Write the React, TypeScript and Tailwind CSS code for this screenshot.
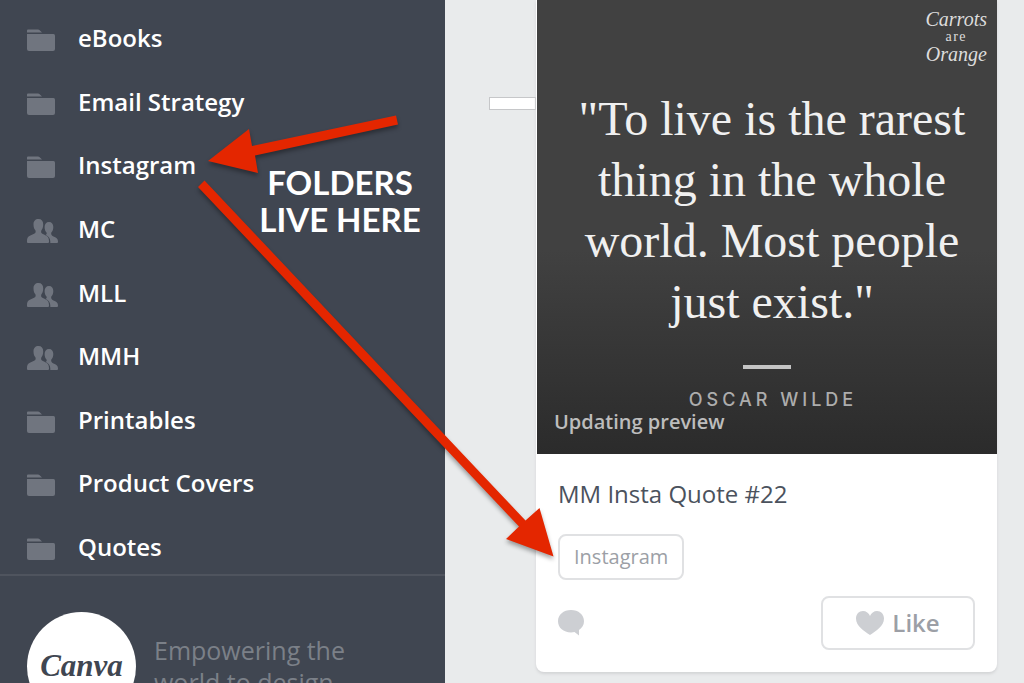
import { Fragment } from "react";
import { clsx } from "clsx";

type Folder = { name: string; shared?: boolean };

const folders: Folder[] = [
  { name: "eBooks" },
  { name: "Email Strategy" },
  { name: "Instagram" },
  { name: "MC", shared: true },
  { name: "MLL", shared: true },
  { name: "MMH", shared: true },
  { name: "Printables" },
  { name: "Product Covers" },
  { name: "Quotes" },
];

const quote = [
  '"To live is the rarest',
  "thing in the whole",
  "world. Most people",
  'just exist."',
];

function FolderIcon() {
  return (
    <svg width="32" height="24" viewBox="0 -1 32 24" fill="#70757f" aria-hidden="true">
      <path d="M0 3.500V1.500Q0 0.500 1 0.500H11Q12 0.500 12.700 1.200L15 3.500Z" />
      <path d="M0 5H26.500Q28 5 28 6.500V20Q28 22 26 22H2Q0 22 0 20Z" />
    </svg>
  );
}

function PeopleIcon() {
  return (
    <svg width="32" height="24" viewBox="0 0 32 24" fill="#70757f" aria-hidden="true">
      <path d="M11.500 0C8.400 0 6.500 2 6.500 5.200C6.500 8 7.200 10 8.500 11.500C9.200 13.600 8 14.600 5.500 15.600C2.500 16.800 0 17.800 0 22V23Q0 24 1 24H21Q22 24 22 23V22C22 17.800 19.500 16.800 17 15.600C14.500 14.600 13.600 13.600 14.300 11.500C15.500 10 16.200 8 16.200 5.200C16.200 2 14.500 0 11.500 0Z" />
      <path d="M22 3C19.200 3 17.600 5 17.600 8C17.600 10.400 18.300 12.400 19.500 13.600C20 14.800 19.600 15.600 18.600 16C21.500 17.400 23.300 19 23.300 22.400V24H30Q31 24 31 23V22.500C31 19.500 29 18.600 26.500 17.500C24.500 16.600 23.800 15.400 24.300 13.600C25.600 12.400 26.300 10.400 26.300 8C26.300 5 24.800 3 22 3Z" />
    </svg>
  );
}

function Sidebar() {
  return (
    <aside className="flex flex-col w-[445px] shrink-0 bg-[#404651]">
      <nav className="flex-1 pt-5 pb-[9px] border-b-2 border-[#4f545e]">
        <ul className="flex flex-col justify-between h-full">
          {folders.map((folder) => (
            <li key={folder.name}>
              <a
                href="#"
                className="flex items-center gap-[19px] h-9 pl-[27px] text-white text-[24px] font-semibold"
              >
                <span className="pt-1 w-8 shrink-0">
                  {folder.shared ? <PeopleIcon /> : <FolderIcon />}
                </span>
                {folder.name}
              </a>
            </li>
          ))}
        </ul>
      </nav>
      <footer className="flex gap-[18px] h-[107px] pt-9 pl-[27px] overflow-hidden">
        <div className="flex items-center justify-center size-[109px] shrink-0 rounded-full bg-white text-[#404651] text-[31px] font-bold italic font-['Liberation_Serif',serif]">
          Canva
        </div>
        <p className="pt-[22px] text-[25px] leading-8 text-[#7b8088]">
          Empowering the
          <br />
          world to design
        </p>
      </footer>
    </aside>
  );
}

function Preview() {
  return (
    <div className="flex flex-col h-[454px] ml-px pt-[9px] bg-[linear-gradient(180deg,#414141_0%,#414141_55%,#2b2b2b_100%)]">
      <div className="self-end pr-[10px] text-center text-[#dcdcdc] text-[20px] leading-5 italic font-['Liberation_Serif',serif]">
        <p>Carrots</p>
        <p className="text-[14px] leading-[15px] not-italic tracking-widest">are</p>
        <p>Orange</p>
      </div>
      <blockquote className="pt-6 pl-[10px] text-center text-[#f0f0f0] text-[48px] leading-[61px] whitespace-nowrap font-['Liberation_Serif',serif]">
        {quote.map((line) => (
          <Fragment key={line}>
            {line}
            <br />
          </Fragment>
        ))}
      </blockquote>
      <div className="w-12 h-1 mt-[33px] mx-auto bg-[#c4c4c4]" />
      <p className="pt-[19px] pl-3 text-center text-[#adadad] text-[18px] leading-6 font-medium tracking-[4px] font-[Inter,sans-serif]">
        OSCAR WILDE
      </p>
      <p className="pl-[17px] text-[#bdbdbd] text-[20px] leading-5 font-semibold">
        Updating preview
      </p>
    </div>
  );
}

function DesignCard() {
  return (
    <article className="flex-1 mr-[27px] self-start rounded-b-lg bg-white shadow-[0_2px_3px_#d3d4d6]">
      <Preview />
      <div className="pt-6 px-[22px] pb-[22px]">
        <h2 className="text-[24px] leading-8 font-medium text-[#4b525d]">
          MM Insta Quote #22
        </h2>
        <a
          href="#"
          className="inline-flex items-center h-[46px] mt-6 px-[14px] rounded-lg border-2 border-[#e0e1e3] text-[20px] font-medium text-[#9c9fa6]"
        >
          Instagram
        </a>
        <div className="flex items-center justify-between pt-4">
          <button aria-label="Comments">
            <svg width="26" height="26" viewBox="0 0 26 26" fill="#cdcfd3">
              <path d="M13 0C5.500 0 0 4.700 0 11.200C0 17.700 5.500 22.400 13 22.400Q15 22.400 16.500 22L21 25.500V20C24 18 26 15 26 11.200C26 4.700 20.500 0 13 0Z" />
            </svg>
          </button>
          <button className="flex items-center justify-center gap-2 w-[154px] h-[54px] rounded-lg border-2 border-[#e0e1e3] text-[24px] font-semibold text-[#9c9fa6]">
            <svg width="28" height="24" viewBox="0 0 28 24" fill="#cdcfd3" aria-hidden="true">
              <path d="M14 24C8 20 0 15 0 7.500C0 3 3 0 7 0C10 0 13 2 14 5C15 2 18 0 21 0C25 0 28 3 28 7.500C28 15 20 20 14 24Z" />
            </svg>
            Like
          </button>
        </div>
      </div>
    </article>
  );
}

// red pointers and caption drawn over the page
function Annotations() {
  return (
    <div className="absolute top-0 left-0 pointer-events-none">
      <svg width="600" height="600" viewBox="0 0 600 600" fill="#e42600" className="drop-shadow-[0_3px_2px_rgba(0,0,0,0.35)]">
        <path d="M208 161L249 129L252 146L396 115.500L398 124.500L255 155.500L258 173Z" />
        <path d="M204.500 180.500L525.500 520.500L539.500 508L553.500 556.500L506 539L519 526.500L198 187Z" />
      </svg>
      <p className="absolute top-[164px] left-[240px] w-[200px] text-center text-white text-[33px] leading-[37px] font-bold font-[Lato,sans-serif]">
        FOLDERS
        <br />
        LIVE HERE
      </p>
    </div>
  );
}

export default function App() {
  return (
    <div
      className={clsx(
        "relative flex h-screen overflow-hidden bg-[#e9ebec]",
        "font-['Open_Sans',sans-serif]"
      )}
    >
      <Sidebar />
      <main className="flex flex-1">
        <div className="flex justify-end items-start w-[91px] shrink-0 pt-[97px]">
          <div className="w-[47px] h-[13px] bg-white border border-[#c6c7c9]" />
        </div>
        <DesignCard />
      </main>
      <Annotations />
    </div>
  );
}
